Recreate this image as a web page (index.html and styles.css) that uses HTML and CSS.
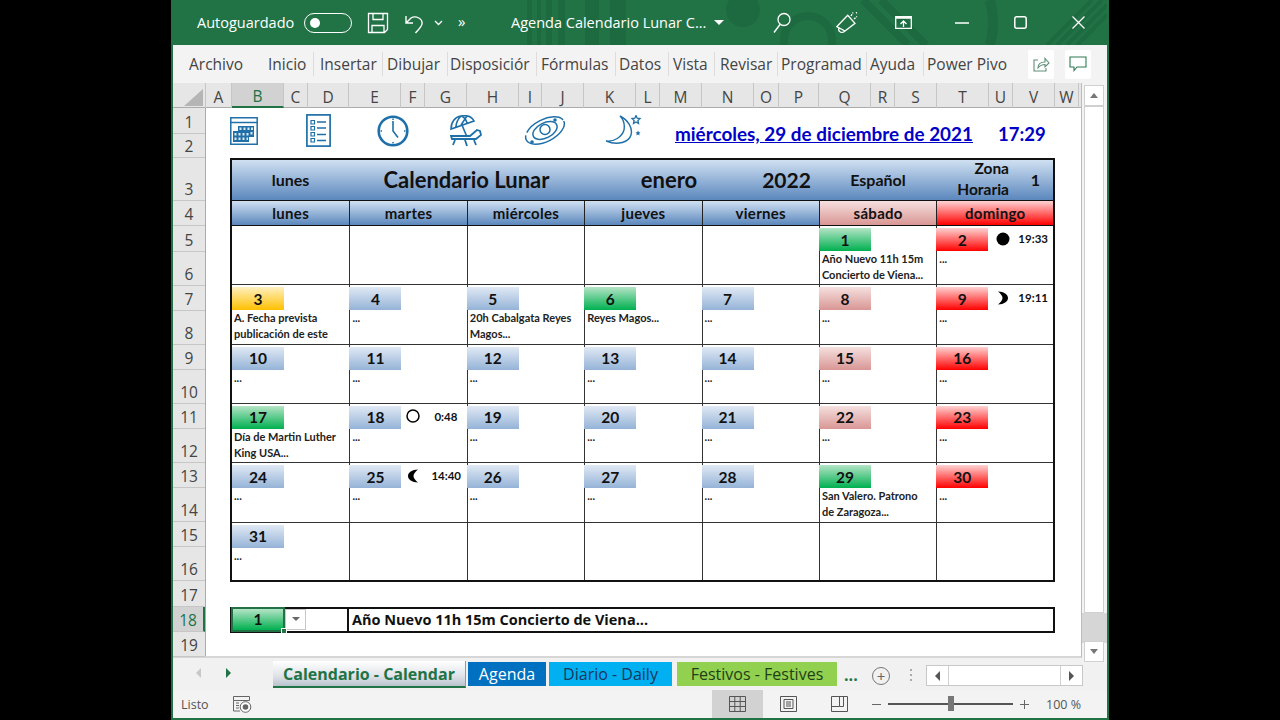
FILE: index.html
```html
<!DOCTYPE html>
<html lang="es">
<head>
<meta charset="utf-8">
<title>Agenda Calendario Lunar</title>
<link rel="stylesheet" href="styles.css">
</head>
<body>
<div class="window">
  <header class="titlebar">
    <svg class="title-art" viewBox="0 0 934 45" aria-hidden="true">
      <g fill="#1d6a40"><rect x="354" y="0" width="5" height="45"/><rect x="364" y="0" width="4" height="45"/><rect x="373" y="0" width="6" height="45"/><rect x="385" y="0" width="7" height="45"/><rect x="412" y="0" width="14" height="45"/><rect x="437" y="0" width="16" height="45"/><circle cx="570" cy="10" r="17"/></g>
      <g fill="none" stroke="#1d6a40" stroke-width="8"><circle cx="635" cy="40" r="24"/><path d="M690 0 735 45M708 0 753 45"/><path d="M817 0c4 15 4 30 0 45" stroke-width="10"/><path stroke-width="4" d="M894 45 934 5M904 45 934 15M884 45 929 0M874 45 919 0"/></g>
    </svg>
    <span class="autosave">Autoguardado</span>
    <span class="toggle"><i></i></span>
    <svg class="ti ti-save" width="22" height="22" viewBox="0 0 22 22"><path d="M1.500 1.500h19v16l-3 3h-16zM6 1.500v6h10v-6M5 20.500v-7h12v7" fill="none" stroke="#fff" stroke-width="1.300"/></svg>
    <svg class="ti ti-undo" width="22" height="22" viewBox="0 0 22 22"><path d="M2 4v7h7M2.500 10.500 7 6c5-3 12 1 11 6-.5 3-4 6-6.500 9" fill="none" stroke="#fff" stroke-width="1.400"/></svg>
    <svg class="ti ti-chev" width="9" height="6" viewBox="0 0 9 6"><path d="M1 1l3.500 3.500L8 1" fill="none" stroke="#fff" stroke-width="1.300"/></svg>
    <span class="more">»</span>
    <span class="doc">Agenda Calendario Lunar C...</span>
    <span class="caret"></span>
    <svg class="ti ti-search" width="18" height="22" viewBox="0 0 18 22"><circle cx="11" cy="7.500" r="6" fill="none" stroke="#fff" stroke-width="1.300"/><path d="M7 12.500 1 20.500" stroke="#fff" stroke-width="1.400"/></svg>
    <svg class="ti ti-wand" width="22" height="21" viewBox="0 0 22 21"><path d="M11.700 3.300 19 11.300 9 19 .7 14.700zM3 16a3.200 3.200 0 1 0 6 2.500" fill="none" stroke="#fff" stroke-width="1.300"/><path d="M15 4l2-3.500M18 7l3-2.500M20 1l1-.5" stroke="#fff" stroke-width="1.400" stroke-dasharray="2 1"/></svg>
    <svg class="ti ti-disp" width="17" height="13" viewBox="0 0 17 13"><path d="M.7.7h15.600v11.600H.7z" fill="none" stroke="#fff" stroke-width="1.300"/><path d="M.7 1.500h15.600" stroke="#fff" stroke-width="2.500"/><path d="M8.500 11V5.500M5.500 8l3-3 3 3" fill="none" stroke="#fff" stroke-width="1.300"/></svg>
    <svg class="ti ti-min" width="14" height="2" viewBox="0 0 14 2"><path d="M0 1h14" stroke="#fff" stroke-width="1.500"/></svg>
    <svg class="ti ti-max" width="13" height="13" viewBox="0 0 13 13"><rect x=".8" y=".8" width="11.400" height="11.400" rx="2" fill="none" stroke="#fff" stroke-width="1.500"/></svg>
    <svg class="ti ti-close" width="13" height="13" viewBox="0 0 13 13"><path d="M.5.5l12 12M12.500.5l-12 12" stroke="#fff" stroke-width="1.300"/></svg>
  </header>

  <nav class="ribbon">
    <span class="rt rt-archivo">Archivo</span>
    <span class="rt rt-inicio sep">Inicio</span>
    <span class="rt rt-insertar sep">Insertar</span>
    <span class="rt rt-dibujar sep">Dibujar</span>
    <span class="rt rt-disp sep">Disposiciór</span>
    <span class="rt rt-form sep">Fórmulas</span>
    <span class="rt rt-datos sep">Datos</span>
    <span class="rt rt-vista sep">Vista</span>
    <span class="rt rt-revisar sep">Revisar</span>
    <span class="rt rt-prog sep">Programad</span>
    <span class="rt rt-ayuda sep">Ayuda</span>
    <span class="rt rt-power">Power Pivo</span>
    <span class="rbtn rbtn-share"><svg width="18" height="18" viewBox="0 0 18 18"><path d="M6 5H2v11h12v-3M6 13c0-4 3-6 7-6V3.500l4 4.500-4 4V9.500c-3 0-5 1-7 3.500z" fill="none" stroke="#5f8f76" stroke-width="1.100"/></svg></span>
    <span class="rbtn"><svg width="18" height="16" viewBox="0 0 18 16"><path d="M1 1h16v10H8l-3 3.500V11H1z" fill="none" stroke="#2f7a52" stroke-width="1.100"/></svg></span>
  </nav>

  <section class="workarea">
    <div class="sheet">
      <div class="colhead">
        <span class="corner"></span>
        <span>A</span><span class="on">B</span><span>C</span><span>D</span><span>E</span><span>F</span><span>G</span><span>H</span><span>I</span><span>J</span><span>K</span><span>L</span><span>M</span><span>N</span><span>O</span><span>P</span><span>Q</span><span>R</span><span>S</span><span>T</span><span>U</span><span>V</span><span>W</span>
      </div>
      <div class="sheetbody">
        <div class="rowhead">
          <span>1</span><span>2</span><span>3</span><span>4</span><span>5</span><span>6</span><span>7</span><span>8</span><span>9</span><span>10</span><span>11</span><span>12</span><span>13</span><span>14</span><span>15</span><span>16</span><span>17</span><span class="on">18</span><span>19</span>
        </div>
        <div class="content">
          <div class="iconrow">
            <svg class="ic ic-cal" width="28" height="28" viewBox="0 0 28 28"><path d="M.8.800h26.400v26.400H.8z" fill="#fff" stroke="#1f6fa8" stroke-width="1.500"/><path d="M1 5.500h26" stroke="#1f6fa8" stroke-width="1.500"/><path d="M8 9h16v11h-5v5H3V14h5z" fill="#1f6fa8"/><path d="M4.500 16h2v2.500h-2zM4.500 20.500h2V23h-2zM8.500 16h2v2.500h-2zM8.500 20.500h2V23h-2zM12.500 16h2v2.500h-2zM12.500 20.500h2V23h-2zM16.500 16h2v2.500h-2zM16.500 20.500h1.500V23h-1.500zM9.500 10.500h2V13h-2zM13.500 10.500h2V13h-2zM17.500 10.500h2V13h-2zM21 10.500h2V13h-2zM20.500 15h2v2.500h-2z" fill="#fff" opacity=".85"/></svg>
            <svg class="ic ic-list" width="25" height="33" viewBox="0 0 25 33"><rect x=".9" y=".9" width="23.200" height="31.200" fill="none" stroke="#1f6fa8" stroke-width="1.700"/><path d="M5 6.500h3.500V10H5zM5 12.500h3.500V16H5zM5 18.500h3.500V22H5zM5 24.500h3.500V28H5z" fill="none" stroke="#1f6fa8" stroke-width="1.200"/><path d="M11 8h9M11 14h9M11 20.500h9M11 26.500h9" stroke="#1f6fa8" stroke-width="1.500"/></svg>
            <svg class="ic ic-clock" width="32" height="32" viewBox="0 0 32 32"><circle cx="16" cy="16" r="14.300" fill="none" stroke="#1f6fa8" stroke-width="2.600"/><path d="M16 6v10l5 6.500" fill="none" stroke="#1f6fa8" stroke-width="1.600"/><path d="M16 3.500v1.500M16 27v1.500M3.500 16H5M27 16h1.500" stroke="#1f6fa8" stroke-width="1.500"/></svg>
            <svg class="ic ic-beach" width="34" height="32" viewBox="0 0 34 32"><path d="M1 14C1 7 5 2 11 1c6-1 11 1 13 5zM6 12c0-5 2-8 5-11 3 1 5 3 6 7M11 10l6-9" fill="none" stroke="#1f6fa8" stroke-width="1.600"/><path d="M12 10l5 12" stroke="#1f6fa8" stroke-width="1.600"/><path d="M1 21h19l7-6 3 1 1 4-5 4H2zM5 25l-2 5M24 25l2 5M15 25l2 6" fill="none" stroke="#1f6fa8" stroke-width="1.800"/></svg>
            <svg class="ic ic-galaxy" width="42" height="33" viewBox="0 0 42 33"><g fill="none" stroke="#1f6fa8" stroke-width="1.500"><ellipse cx="21" cy="16.500" rx="21" ry="11" transform="rotate(-27 21 16.500)" stroke-dasharray="56 3 42 3"/><ellipse cx="21" cy="16.500" rx="13" ry="7.500" transform="rotate(-27 21 16.500)"/><circle cx="21" cy="15.500" r="5"/></g><circle cx="8" cy="28" r="1.800" fill="#1f6fa8"/><circle cx="31" cy="6" r="1.800" fill="#1f6fa8"/></svg>
            <svg class="ic ic-moon" width="36" height="31" viewBox="0 0 36 31"><path d="M14 1c8 4 13 12 11 19-2 7-13 11-25 6 8 1 16-4 18-11 1-6-1-11-4-14z" fill="none" stroke="#1f6fa8" stroke-width="1.400"/><path d="M30 .5l1.200 2.700 2.800.3-2.100 2 .6 3-2.500-1.500-2.500 1.500.6-3-2.100-2 2.800-.3z" fill="none" stroke="#1f6fa8" stroke-width="1.300"/><path d="M32 15.500l.8 1.700 1.700.3-1.300 1.200.4 1.800-1.600-1-1.600 1 .4-1.800-1.300-1.200 1.700-.3z" fill="#1f6fa8"/></svg>
            <a class="today">miércoles, 29 de diciembre de 2021</a>
            <span class="clock">17:29</span>
          </div>

          <div class="calendar">
            <div class="cal-title">
              <span class="t-day">lunes</span>
              <span class="t-main">Calendario Lunar</span>
              <span class="t-main">enero</span>
              <span class="t-year">2022</span>
              <span class="t-day">Español</span>
              <span class="t-zone">Zona<br>Horaria</span>
              <span class="t-day">1</span>
            </div>
            <div class="cal-days">
              <span>lunes</span><span>martes</span><span>miércoles</span><span>jueves</span><span>viernes</span><span class="sat">sábado</span><span class="sun">domingo</span>
            </div>
            <div class="cal-grid">
              <div class="cell"></div><div class="cell"></div><div class="cell"></div><div class="cell"></div><div class="cell"></div>
              <div class="cell"><div class="top"><b class="chip green">1</b></div><p>Año Nuevo 11h 15m Concierto de Viena...</p></div>
              <div class="cell"><div class="top"><b class="chip red">2</b><svg class="ph" width="14" height="14" viewBox="0 0 14 14"><circle cx="7" cy="7" r="6.500" fill="#000"/></svg><time class="t2">19:33</time></div><p>...</p></div>

              <div class="cell"><div class="top"><b class="chip yellow">3</b></div><p>A. Fecha prevista publicación de este</p></div>
              <div class="cell"><div class="top"><b class="chip">4</b></div><p>...</p></div>
              <div class="cell"><div class="top"><b class="chip">5</b></div><p>20h Cabalgata Reyes Magos...</p></div>
              <div class="cell"><div class="top"><b class="chip green">6</b></div><p>Reyes Magos...</p></div>
              <div class="cell"><div class="top"><b class="chip">7</b></div><p>...</p></div>
              <div class="cell"><div class="top"><b class="chip pink">8</b></div><p>...</p></div>
              <div class="cell"><div class="top"><b class="chip red">9</b><svg class="ph" width="14" height="14" viewBox="0 0 14 14"><path d="M2 .5C8 .5 12 3.500 12 7s-4 6.500-10 6.500C5 11 6.500 9 6.500 7S5 3 2 .5z" fill="#000"/></svg><time class="t2">19:11</time></div><p>...</p></div>

              <div class="cell"><div class="top"><b class="chip">10</b></div><p>...</p></div>
              <div class="cell"><div class="top"><b class="chip">11</b></div><p>...</p></div>
              <div class="cell"><div class="top"><b class="chip">12</b></div><p>...</p></div>
              <div class="cell"><div class="top"><b class="chip">13</b></div><p>...</p></div>
              <div class="cell"><div class="top"><b class="chip">14</b></div><p>...</p></div>
              <div class="cell"><div class="top"><b class="chip pink">15</b></div><p>...</p></div>
              <div class="cell"><div class="top"><b class="chip red">16</b></div><p>...</p></div>

              <div class="cell"><div class="top"><b class="chip green">17</b></div><p>Día de Martin Luther King USA...</p></div>
              <div class="cell"><div class="top"><b class="chip">18</b><svg class="ph ph-l" width="14" height="14" viewBox="0 0 14 14"><circle cx="7" cy="7" r="6" fill="none" stroke="#000" stroke-width="1.500"/></svg><time class="t3">0:48</time></div><p>...</p></div>
              <div class="cell"><div class="top"><b class="chip">19</b></div><p>...</p></div>
              <div class="cell"><div class="top"><b class="chip">20</b></div><p>...</p></div>
              <div class="cell"><div class="top"><b class="chip">21</b></div><p>...</p></div>
              <div class="cell"><div class="top"><b class="chip pink">22</b></div><p>...</p></div>
              <div class="cell"><div class="top"><b class="chip red">23</b></div><p>...</p></div>

              <div class="cell"><div class="top"><b class="chip">24</b></div><p>...</p></div>
              <div class="cell"><div class="top"><b class="chip">25</b><svg class="ph ph-l" width="14" height="14" viewBox="0 0 14 14"><path d="M12 .5C6 .5 2 3.500 2 7s4 6.500 10 6.500C9 11 7.500 9 7.500 7S9 3 12 .5z" fill="#000"/></svg><time class="t4">14:40</time></div><p>...</p></div>
              <div class="cell"><div class="top"><b class="chip">26</b></div><p>...</p></div>
              <div class="cell"><div class="top"><b class="chip">27</b></div><p>...</p></div>
              <div class="cell"><div class="top"><b class="chip">28</b></div><p>...</p></div>
              <div class="cell"><div class="top"><b class="chip green">29</b></div><p>San Valero. Patrono<br>de Zaragoza...</p></div>
              <div class="cell"><div class="top"><b class="chip red">30</b></div><p>...</p></div>

              <div class="cell"><div class="top"><b class="chip">31</b></div><p>...</p></div>
              <div class="cell"></div><div class="cell"></div><div class="cell"></div><div class="cell"></div><div class="cell"></div><div class="cell"></div>
            </div>
          </div>

          <div class="detail">
            <div class="sel">1<i class="handle"></i></div>
            <div class="drop"><span class="drop-btn"></span></div>
            <div class="detail-text">Año Nuevo 11h 15m Concierto de Viena...</div>
          </div>
        </div>
      </div>
    </div>
    <aside class="vscroll">
      <span class="sb-btn"><i class="arr-up"></i></span>
      <span class="sb-thumb"></span>
      <span class="sb-btn"><i class="arr-down"></i></span>
    </aside>
  </section>

  <div class="tabbar">
    <div class="tabnav"><i class="nav-l"></i><i class="nav-r"></i></div>
    <span class="tab tab-cal">Calendario - Calendar</span>
    <span class="tab tab-agenda">Agenda</span>
    <span class="tab tab-diario">Diario - Daily</span>
    <span class="tab tab-fest">Festivos - Festives</span>
    <span class="tab-more">...</span>
    <span class="tab-add">+</span>
    <span class="tab-dots"></span>
    <div class="hscroll"><span class="hs-btn"><i class="nav-l dark"></i></span><span class="hs-track"></span><span class="hs-btn"><i class="nav-r dark"></i></span></div>
  </div>

  <footer class="status">
    <span class="ready">Listo</span>
    <svg class="macro" width="19" height="17" viewBox="0 0 19 17"><path d="M.5.500h16v4H.5zM.5 4.500V15H7M3 7h3M3 9.500h3M3 12h3" fill="none" stroke="#666"/><circle cx="12.500" cy="11" r="5.300" fill="#fff" stroke="#666"/><circle cx="12.500" cy="11" r="2.800" fill="#666"/></svg>
    <span class="view view-on"><svg width="17" height="16" viewBox="0 0 17 16"><path d="M.5.500h16v15H.5zM.5 5.500h16M.5 10.500h16M5.800.500v15M11.200.500v15" fill="none" stroke="#555"/></svg></span>
    <span class="view"><svg width="17" height="16" viewBox="0 0 17 16"><path d="M.5.500h16v15H.5zM4 3.500h9v9H4zM6 6h5M6 8h5M6 10h5" fill="none" stroke="#555"/></svg></span>
    <span class="view"><svg width="17" height="16" viewBox="0 0 17 16"><path d="M.5.500h16v15H.5zM.5 10.500h8V.500M8.500 10.500h4V.500" fill="none" stroke="#555"/></svg></span>
    <span class="zminus"></span>
    <span class="slider"><i></i></span>
    <span class="zplus"></span>
    <span class="zoomv">100 %</span>
  </footer>
</div>
</body>
</html>
```
FILE: styles.css
```css
* { box-sizing: border-box; }
html, body { margin: 0; height: 100%; }
body { background: #000; display: flex; justify-content: center; font-family: "Open Sans", "Noto Sans", sans-serif; overflow: hidden; }

.window { width: 938px; height: 720px; background: #f1f1f1; border: solid #217346; border-width: 0 2px 2px; display: flex; flex-direction: column; }

/* title bar */
.titlebar { height: 45px; flex: none; background: #217346; position: relative; display: flex; align-items: center; color: #fff; font-size: 14.5px; }
.title-art { position: absolute; inset: 0; width: 100%; height: 100%; }
.titlebar > *:not(.title-art) { position: relative; }
.autosave { margin-left: 24px; width: 107px; }
.toggle { width: 48px; height: 20px; border: 1.5px solid #fff; border-radius: 10px; display: flex; align-items: center; padding-left: 5px; }
.toggle i { width: 10px; height: 10px; background: #fff; border-radius: 50%; }
.ti { flex: none; }
.ti-save { margin-left: 15px; }
.ti-undo { margin-left: 15px; }
.ti-chev { margin-left: 8px; }
.more { margin-left: 15px; width: 14px; font-size: 15px; margin-top: -3px; }
.doc { margin-left: 39px; width: 195px; white-space: nowrap; }
.caret { width: 0; height: 0; border: solid transparent; border-width: 5px 5px 0; border-top-color: #fff; margin-left: 8px; }
.ti-search { margin-left: 49px; }
.ti-wand { margin-left: 45px; }
.ti-disp { margin-left: 37px; }
.ti-min { margin-left: 43px; }
.ti-max { margin-left: 45px; }
.ti-close { margin-left: 45px; }

/* ribbon */
.ribbon { height: 38px; flex: none; display: flex; align-items: center; background: #f3f3f3; font-size: 15.500px; color: #444; }
.rt { height: 24px; line-height: 24px; white-space: nowrap; overflow: hidden; flex: none; padding-left: 3px; margin-top: -1px; }
.sep { border-right: 1px solid #dcdcdc; }
.rt-archivo { width: 93px; padding-left: 16px; }
.rt-inicio { width: 48px; padding-left: 2px; }
.rt-insertar { width: 69px; padding-left: 6px; }
.rt-dibujar { width: 65px; padding-left: 4px; }
.rt-disp { width: 89px; padding-left: 2px; }
.rt-form { width: 79px; padding-left: 4px; }
.rt-datos { width: 53px; }
.rt-vista { width: 46px; padding-left: 4px; }
.rt-revisar { width: 63px; padding-left: 5px; }
.rt-prog { width: 89px; padding-left: 3px; }
.rt-ayuda { width: 57px; padding-left: 3px; }
.rt-power { width: 89px; padding-left: 3px; }
.rbtn { width: 26px; height: 29px; background: #fff; display: flex; align-items: center; justify-content: center; flex: none; margin-left: 11px; border-radius: 2px; }
.rbtn-share { margin-left: 15px; }

/* work area */
.workarea { height: 580px; flex: none; display: flex; align-items: flex-start; }
.sheet { width: 909px; height: 575px; flex: none; display: flex; flex-direction: column; background: #fff; border-right: 1px solid #bbb; border-bottom: 2px solid #d6d6d6; }
.colhead { height: 25px; flex: none; display: grid; grid-template-columns: 33px 26px 52px 24px 41px 52px 24px 42px 52px 23px 42px 52px 24px 42px 52px 25px 40px 52px 24px 42px 52px 24px 42px 24px; background: #e6e6e6; border-bottom: 1px solid #ababab; font-size: 15.500px; color: #444; }
.colhead span { display: flex; align-items: center; justify-content: center; border-right: 1px solid #c6c6c6; padding-top: 2px; }
.colhead span.on { background: #d2d2d2; color: #217346; border-bottom: 2px solid #217346; height: 25px; }
.colhead .corner { position: relative; }
.corner::after { content: ""; position: absolute; right: 2px; bottom: 2px; border: solid transparent; border-width: 0 0 17px 19px; border-bottom-color: #b5b5b5; }
.sheetbody { flex: 1; display: flex; min-height: 0; }
.rowhead { width: 33px; flex: none; display: grid; grid-template-rows: 26px 24px 43px 25px 26px 34px 25px 34px 25px 34px 25px 34px 25px 34px 25px 34px 26px 25px 25px; background: #e6e6e6; border-right: 1px solid #ababab; font-size: 15.500px; color: #444; }
.rowhead span { display: flex; align-items: flex-end; justify-content: center; border-bottom: 1px solid #c6c6c6; line-height: 21px; }
.rowhead span.on { background: #d2d2d2; color: #217346; border-right: 2px solid #217346; }
.content { flex: 1; min-width: 0; padding-left: 24px; font-family: Lato, "Liberation Sans", sans-serif; color: #111; }

.iconrow { height: 50px; display: flex; align-items: center; padding-top: 1px; }
.ic { flex: none; margin-top: -6px; }
.ic-list { margin-left: 48px; }
.ic-clock { margin-left: 46px; }
.ic-beach { margin-left: 41px; }
.ic-galaxy { margin-left: 40px; }
.ic-moon { margin-left: 40px; }
.today { margin-left: 33px; font-size: 18.900px; font-weight: 700; color: #0000c8; text-decoration: underline; white-space: nowrap; }
.clock { margin-left: 25px; font-size: 18.500px; font-weight: 700; color: #0000c8; }

/* calendar */
.calendar { width: 825px; border: 2px solid #111; }
.cal-title { height: 41px; display: grid; grid-template-columns: 117px 235px 170px 65px 118px 78px 41px; grid-template-rows: 38px; align-items: center; text-align: center; background: linear-gradient(#d0e0f2, #5b87bd); border-bottom: 1px solid #111; }
.t-day { font-size: 16px; font-weight: 700; }
.t-main { font-size: 22px; font-weight: 700; }
.t-year { font-size: 21px; font-weight: 700; }
.t-zone { font-size: 15.500px; font-weight: 700; line-height: 21px; text-align: right; padding-right: 6px; }
.cal-days, .cal-grid { display: grid; grid-template-columns: repeat(6, 117.400px) 1fr; }
.cal-days { height: 25px; background: linear-gradient(#d0e0f2, #5b87bd); border-bottom: 1px solid #111; }
.cal-days span { display: flex; align-items: center; justify-content: center; font-size: 15px; font-weight: 700; letter-spacing: .3px; border-left: 1px solid #222; }
.cal-days span:first-child { border-left: 0; }
.cal-days .sat { background: linear-gradient(#f5e0df, #d99694); }
.cal-days .sun { background: linear-gradient(#ffd2d2, #ff0000); }
.cal-grid { grid-template-rows: repeat(5, 59.330px) 57px; }
.cell { border-left: 1px solid #333; border-bottom: 1px solid #333; padding-top: 2px; }
.cell:nth-child(7n+1) { border-left: 0; }
.cell:nth-last-child(-n+7) { border-bottom: 0; }
.cell:not(:nth-child(7n+1)) .chip { margin-left: -1px; }
.top { display: flex; align-items: center; height: 23px; }
.chip { width: 52px; height: 23px; flex: none; display: flex; align-items: center; justify-content: center; font-size: 15.500px; font-weight: 700; background: linear-gradient(#e0e9f4, #95b3d7); }
.chip.green { background: linear-gradient(#b4e4c6, #00b050); }
.chip.yellow { background: linear-gradient(#fff0c0, #ffc000); }
.chip.pink { background: linear-gradient(#f5e0df, #d99694); }
.chip.red { background: linear-gradient(#ffd2d2, #ff0000); }
.ph { flex: none; margin-left: 8px; margin-top: -2px; }
.ph-l { margin-left: 5px; }
.top time { font-size: 11.500px; font-weight: 700; margin-top: -2px; white-space: nowrap; }
.t2 { margin-left: 8px; }
.t3 { margin-left: 14px; }
.t4 { margin-left: 11px; }
.cell p { margin: 0; padding: 0 2px; font-size: 11px; font-weight: 700; line-height: 16px; color: #222; }

/* detail row */
.detail { width: 825px; height: 26px; margin-top: 25px; display: flex; border: 2px solid #111; font-weight: 700; }
.sel { width: 54px; margin: -2px 0 -1px -1px; background: linear-gradient(#b4e4c6, #00b050); border: 2px solid #217346; display: flex; align-items: center; justify-content: center; font-size: 15.500px; position: relative; }
.handle { position: absolute; right: -4px; bottom: -4px; width: 6px; height: 6px; background: #217346; border: 1px solid #fff; }
.drop { width: 64px; border-right: 2px solid #111; }
.drop-btn { display: flex; width: 21px; height: 21px; align-items: center; justify-content: center; background: #fff; border: 1px solid #c8c8c8; }
.drop-btn::after { content: ""; border: solid transparent; border-width: 4px 4px 0; border-top-color: #666; }
.detail-text { padding-left: 3px; font-family: "Open Sans", sans-serif; font-size: 14.500px; line-height: 22px; white-space: nowrap; }

/* scrollbar */
.vscroll { flex: 1; height: 100%; display: flex; flex-direction: column; padding: 2px 3px 0 2px; background: linear-gradient(#f3f3f3 0 530px, #d6d6d6 530px 560px, #f3f3f3 560px); }
.sb-btn { height: 21px; flex: none; background: #fff; border: 1px solid #d0d0d0; display: flex; align-items: center; justify-content: center; }
.sb-thumb { height: 507px; flex: none; background: #fff; border: 1px solid #d0d0d0; }
.vscroll .sb-btn:last-child { margin-top: 28px; }
.arr-up { border: solid transparent; border-width: 0 4px 5px; border-bottom-color: #777; }
.arr-down { border: solid transparent; border-width: 5px 4px 0; border-top-color: #777; }

/* tabs */
.tabbar { height: 32px; margin-top: -5px; flex: none; display: flex; align-items: flex-start; }
.tabnav { width: 100px; height: 30px; display: flex; align-items: center; padding-left: 23px; gap: 25px; flex: none; }
.nav-l { border: solid transparent; border-width: 5px 5px 5px 0; border-right-color: #c8c8c8; }
.nav-r { border: solid transparent; border-width: 5px 0 5px 5px; border-left-color: #217346; }
.nav-l.dark { border-right-color: #555; }
.nav-r.dark { border-left-color: #555; }
.tab { height: 24px; margin-top: 4px; flex: none; display: flex; align-items: center; justify-content: center; font-size: 16px; white-space: nowrap; }
.tab-cal { width: 193px; height: 27px; margin-top: 3px; background: linear-gradient(#fff, #dfe3e8 60%, #b9c3cf); color: #217346; font-weight: 700; border-bottom: 2px solid #217346; border-right: 1px solid #999; }
.tab-agenda { width: 78px; margin-left: 2px; background: #0070c0; color: #fff; }
.tab-diario { width: 123px; margin-left: 3px; background: #00b0f0; color: #17365d; }
.tab-fest { width: 160px; margin-left: 5px; background: #92d050; color: #1f3f14; }
.tab-more { margin: 9px 0 0 7px; width: 21px; font-size: 16px; font-weight: 700; color: #217346; line-height: 16px; }
.tab-add { width: 18px; height: 18px; margin: 9px 0 0 7px; border: 1px solid #777; border-radius: 50%; display: flex; align-items: center; justify-content: center; color: #666; font-size: 15px; line-height: 1; flex: none; }
.tab-dots { width: 2px; height: 13px; margin: 11px 0 0 20px; background: repeating-linear-gradient(#aaa 0 2px, transparent 2px 5px); flex: none; }
.hscroll { display: flex; width: 157px; height: 21px; margin: 7px 0 0 14px; background: #fff; border: 1px solid #c8c8c8; flex: none; }
.hs-btn { width: 21px; flex: none; display: flex; align-items: center; justify-content: center; background: #fff; }
.hs-track { flex: 1; border: solid #d0d0d0; border-width: 0 1px; }

/* status */
.status { flex: 1; display: flex; align-items: center; font-size: 12.500px; color: #555; background: #f3f3f3; }
.ready { margin-left: 8px; width: 52px; }
.macro { flex: none; }
.view { width: 51px; height: 100%; flex: none; display: flex; align-items: center; justify-content: center; }
.view-on { background: #d2d2d2; margin-left: 460px; }
.zminus { width: 9px; height: 1px; background: #666; margin-left: 7px; flex: none; }
.slider { width: 125px; height: 2px; background: #555; margin-left: 7px; position: relative; flex: none; }
.slider i { position: absolute; left: 60px; top: -7px; width: 6px; height: 15px; background: #777; }
.zplus { width: 9px; height: 9px; margin-left: 7px; flex: none; background: linear-gradient(#666, #666) center/100% 1px no-repeat, linear-gradient(#666, #666) center/1px 100% no-repeat; }
.zoomv { margin-left: 17px; white-space: nowrap; }
```
